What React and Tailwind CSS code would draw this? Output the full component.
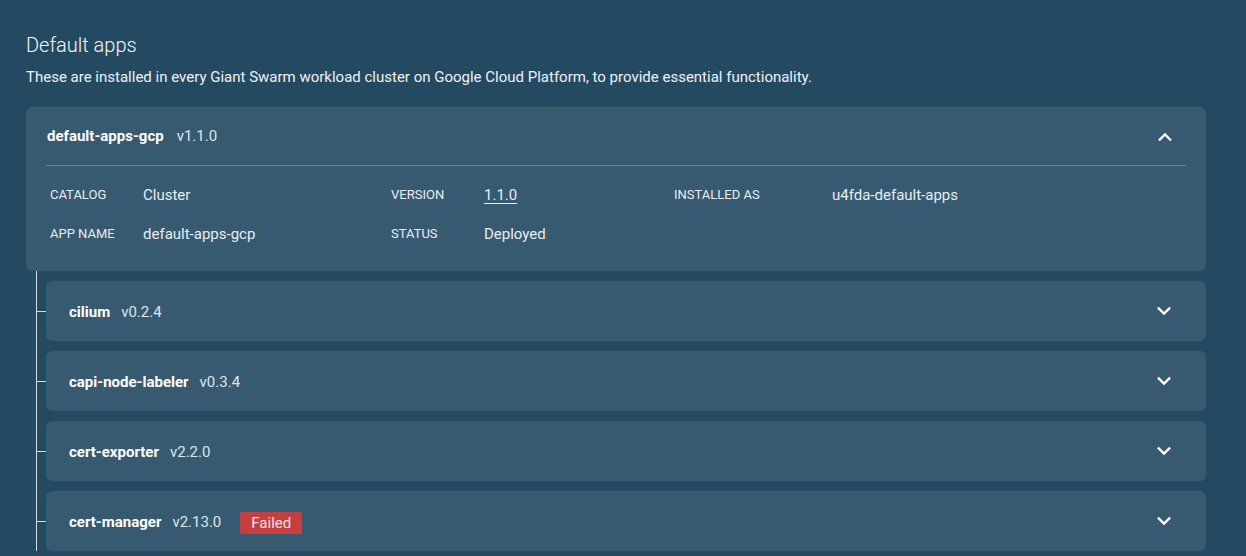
import React from "react";

const Chevron = ({ up }) => (
  <svg width="18" height="18" viewBox="0 0 24 24" fill="none" stroke="#ffffff" strokeWidth="3" strokeLinecap="square">
    {up ? <path d="M5 15.5 L12 8.5 L19 15.5" /> : <path d="M5 8.5 L12 15.5 L19 8.5" />}
  </svg>
);

const children = [
  { name: "cilium", version: "v0.2.4" },
  { name: "capi-node-labeler", version: "v0.3.4" },
  { name: "cert-exporter", version: "v2.2.0" },
  { name: "cert-manager", version: "v2.13.0", failed: true },
];

export default function App() {
  return (
    <div className="w-[1246px] h-[556px] overflow-hidden bg-[#244a62] text-white" style={{ fontFamily: "Roboto, 'Liberation Sans', sans-serif" }}>
      <div className="pl-[26px] pr-[40px] pt-[32px]">
        <h2 className="text-[20px] font-light leading-[26px] text-[#f4f6f8]">Default apps</h2>
        <p className="mt-[9px] text-[15px] leading-[20px] text-[#eef1f4]">
          These are installed in every Giant Swarm workload cluster on Google Cloud Platform, to provide essential functionality.
        </p>
        <div className="mt-[20px] rounded-[6px] bg-[#375a71] px-[20px]">
          <div className="flex h-[58px] items-center justify-between pl-[1px] pr-[12px]">
            <div className="flex items-baseline gap-[13px] text-[15px]">
              <span className="font-bold">default-apps-gcp</span>
              <span className="text-[#dfe6ea]">v1.1.0</span>
            </div>
            <div className="pt-[2px]"><Chevron up /></div>
          </div>
          <div className="h-px bg-[#6a8699]" />
          <div className="grid grid-cols-[341px_283px_1fr] gap-y-[19px] pl-[4px] pt-[19px] pb-[27px] text-[15px]">
            <div className="flex h-[20px] items-center">
              <span className="w-[93px] text-[13px] text-[#e8edf0]">CATALOG</span>
              <span className="text-[#e8edf0]">Cluster</span>
            </div>
            <div className="flex h-[20px] items-center">
              <span className="w-[93px] text-[13px] text-[#e8edf0]">VERSION</span>
              <span className="underline underline-offset-[3px] text-[#e8edf0]">1.1.0</span>
            </div>
            <div className="flex h-[20px] items-center">
              <span className="w-[158px] text-[13px] text-[#e8edf0]">INSTALLED AS</span>
              <span className="text-[#e8edf0]">u4fda-default-apps</span>
            </div>
            <div className="flex h-[20px] items-center">
              <span className="w-[93px] text-[13px] text-[#e8edf0]">APP NAME</span>
              <span className="text-[#e8edf0]">default-apps-gcp</span>
            </div>
            <div className="flex h-[20px] items-center">
              <span className="w-[93px] text-[13px] text-[#e8edf0]">STATUS</span>
              <span className="text-[#e8edf0]">Deployed</span>
            </div>
            <div />
          </div>
        </div>
        <div className="ml-[10px] flex flex-col gap-[10px] border-l border-[#d4dde3] pt-[10px]">
          {children.map((c) => (
            <div key={c.name} className="flex items-center">
              <div className="h-px w-[9px] bg-[#d4dde3]" />
              <div className="flex h-[60px] flex-1 items-center justify-between rounded-[6px] bg-[#375a71] pl-[23px] pr-[33px]">
                <div className="flex items-center gap-[11px] pt-[3px] text-[15px]">
                  <span className="font-bold">{c.name}</span>
                  <span className="text-[#dfe6ea]">{c.version}</span>
                  {c.failed && (
                    <span className="ml-[8px] rounded-[2px] bg-[#c3403f] px-[11px] py-[1px] text-[15px] leading-[20px] text-[#f3e4e4]">Failed</span>
                  )}
                </div>
                <Chevron />
              </div>
            </div>
          ))}
        </div>
      </div>
    </div>
  );
}
